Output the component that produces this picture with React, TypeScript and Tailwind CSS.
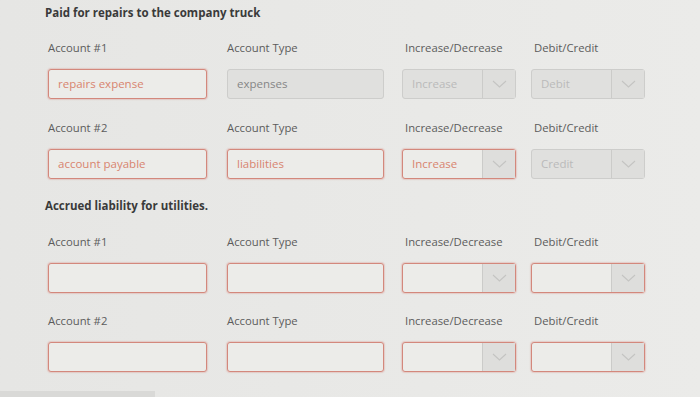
import React from "react";

type Field = {
  kind: "input" | "select";
  value?: string;
  state: "red" | "disabled";
  tone?: "dark" | "light";
};

const Chevron = () => (
  <svg width="15" height="8" viewBox="0 0 15 8" fill="none">
    <path d="M1 1 L7.5 7 L14 1" stroke="#c4c4c2" strokeWidth="1.1" />
  </svg>
);

function Box({ f }: { f: Field }) {
  const base =
    f.state === "red"
      ? "border-[1.5px] border-[#d3887c] bg-[#ecece9] shadow-[0_0_1px_1px_rgba(220,150,140,0.35)]"
      : "border-[1.5px] border-[#cdcdcb] bg-[#e0e0de]";
  const textColor =
    f.state === "red"
      ? "text-[#d8846f]"
      : f.tone === "dark"
      ? "text-[#868686]"
      : "text-[#bababa]";
  return (
    <div className={`h-[30px] rounded-[3px] flex items-stretch ${base}`}>
      <div className={`flex-1 flex items-center pl-[9px] text-[11.5px] ${textColor}`}>
        {f.value}
      </div>
      {f.kind === "select" && (
        <div className="w-[33px] flex items-center justify-center border-l border-[#cbcbc9] bg-[#dededc]">
          <Chevron />
        </div>
      )}
    </div>
  );
}

const labels = ["Account #", "Account Type", "Increase/Decrease", "Debit/Credit"];

function Row({ n, values, mt }: { n: number; values: Field[]; mt: string }) {
  const widths = ["w-[159px]", "w-[157px]", "w-[114px]", "w-[114px]"];
  const margins = ["ml-0", "ml-[20px]", "ml-[18px]", "ml-[15px]"];
  return (
    <div className={`flex ${mt}`}>
      {values.map((f, i) => (
        <div key={i} className={`${widths[i]} ${margins[i]} flex flex-col`}>
          <div
            className={`h-[16px] leading-[16px] text-[11.3px] text-[#5c5c5c] whitespace-nowrap ${
              i >= 2 ? "pl-[3px]" : ""
            }`}
          >
            {i === 0 ? `${labels[0]}${n}` : labels[i]}
          </div>
          <div className="mt-[13px]">
            <Box f={f} />
          </div>
        </div>
      ))}
    </div>
  );
}

export default function App() {
  const emptyRed = (kind: "input" | "select"): Field => ({ kind, state: "red" });
  return (
    <div
      className="w-[700px] h-[397px] overflow-hidden bg-gradient-to-r from-[#e6e6e4] to-[#ebebe9] pt-[5px] pl-[48px] relative"
      style={{ fontFamily: '"Open Sans", "Noto Sans", sans-serif' }}
    >
      <div className="-ml-[3px] h-[16px] leading-[16px] text-[11.5px] font-bold text-[#3a3a3a]">
        Paid for repairs to the company truck
      </div>
      <Row
        n={1}
        mt="mt-[19px]"
        values={[
          { kind: "input", state: "red", value: "repairs expense" },
          { kind: "input", state: "disabled", tone: "dark", value: "expenses" },
          { kind: "select", state: "disabled", value: "Increase" },
          { kind: "select", state: "disabled", value: "Debit" },
        ]}
      />
      <Row
        n={2}
        mt="mt-[21px]"
        values={[
          { kind: "input", state: "red", value: "account payable" },
          { kind: "input", state: "red", value: "liabilities" },
          { kind: "select", state: "red", value: "Increase" },
          { kind: "select", state: "disabled", value: "Credit" },
        ]}
      />
      <div className="-ml-[3px] mt-[19px] h-[16px] leading-[16px] text-[11.5px] font-bold text-[#3a3a3a]">
        Accrued liability for utilities.
      </div>
      <Row
        n={1}
        mt="mt-[20px]"
        values={[emptyRed("input"), emptyRed("input"), emptyRed("select"), emptyRed("select")]}
      />
      <Row
        n={2}
        mt="mt-[20px]"
        values={[emptyRed("input"), emptyRed("input"), emptyRed("select"), emptyRed("select")]}
      />
      <div className="absolute left-0 bottom-0 h-[6px] w-[155px] bg-[#d9d9d7]" />
    </div>
  );
}
